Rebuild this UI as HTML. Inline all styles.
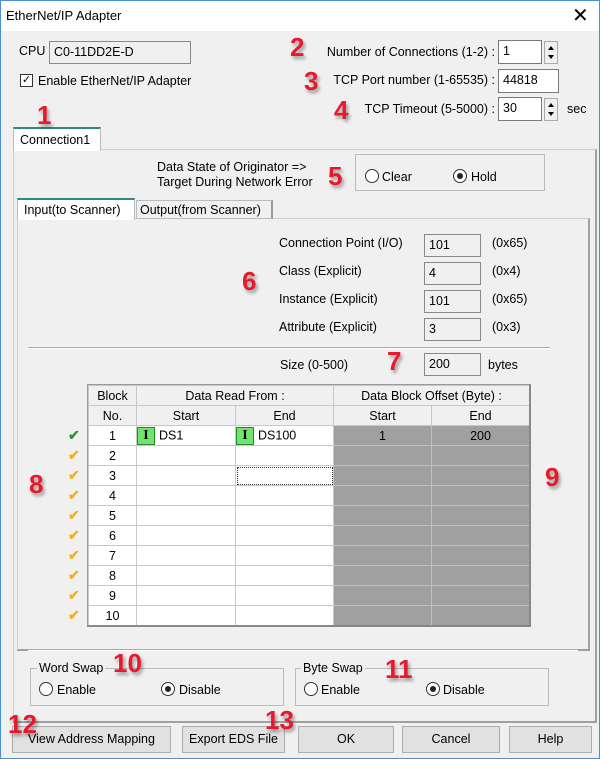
<!DOCTYPE html>
<html><head><meta charset="utf-8"><style>
*{box-sizing:border-box;margin:0;padding:0}
body{width:600px;height:759px;background:#f0f0f0;font-family:"Liberation Sans",sans-serif;font-size:12.5px;color:#000;position:relative;overflow:hidden}
.a{position:absolute}
.win{left:0;top:0;width:600px;height:759px;border:1px solid #4a90d9;}
.title{left:1px;top:1px;width:598px;height:30px;background:#fff}
.box{position:absolute;background:#fff;border:1px solid #7a7a7a;padding:3px 4px;font-size:12.5px}
.ro{background:#f0f0f0;border:1px solid #888}
.red{position:absolute;color:#e8192c;font-weight:bold;font-size:26px;text-shadow:2px 3px 3px rgba(0,0,0,.35);line-height:1}
.spin{position:absolute;width:14px;height:23px;border:1px solid #aaa;background:#f0f0f0}
.spin:before,.spin:after{content:"";position:absolute;left:3px;border-left:3px solid transparent;border-right:3px solid transparent}
.spin:before{top:4px;border-bottom:4px solid #000}
.spin:after{bottom:4px;border-top:4px solid #000}
.radio{position:absolute;width:14px;height:14px;border-radius:50%;border:1px solid #333;background:#fff}
.radio.on:after{content:"";position:absolute;left:3px;top:3px;width:6px;height:6px;border-radius:50%;background:#222}
.grp{position:absolute;border:1px solid #bbb}
.btn{position:absolute;border:1px solid #adadad;background:#e1e1e1;text-align:center;line-height:25px;height:27px}
.rt{position:absolute;right:105px;text-align:right;white-space:nowrap}
table{border-collapse:collapse;position:absolute;left:88px;top:385px;font-size:12.5px}
td{border:1px solid #c8c8c8;height:20px;text-align:center;padding:0;background:#fff}
td.h{background:#f0f0f0}
td.g{background:#a0a0a0;border-color:#c0c0c0}
.ii{display:inline-block;width:18px;height:18px;background:#6ee66e;border:1px solid #2a8a2a;font-family:"Liberation Serif",serif;font-weight:bold;font-size:14px;line-height:16px;text-align:center;vertical-align:middle;margin-right:4px}
.ck{position:absolute;left:68px;font-size:14px;font-weight:bold;color:#f0b020}
</style></head><body>
<div class="a win"></div>
<div class="a title"></div>
<div class="a" style="left:6px;top:8px;font-size:13px">EtherNet/IP Adapter</div>
<div class="a" style="left:572px;top:3px;font-size:20px;font-weight:300">✕</div>

<div class="a" style="left:19px;top:44px">CPU</div>
<div class="box ro" style="left:49px;top:41px;width:142px;height:23px">C0-11DD2E-D</div>
<div class="a" style="left:20px;top:74px;width:13px;height:13px;border:1px solid #333;background:#fff;font-size:11px;line-height:11px;text-align:center">✓</div>
<div class="a" style="left:38px;top:74px">Enable EtherNet/IP Adapter</div>

<div class="rt" style="top:45px">Number of Connections (1-2) :</div>
<div class="box" style="left:498px;top:40px;width:44px;height:24px">1</div>
<div class="spin" style="left:544px;top:41px"></div>
<div class="rt" style="top:73px">TCP Port number (1-65535) :</div>
<div class="box" style="left:498px;top:69px;width:61px;height:24px">44818</div>
<div class="rt" style="top:102px">TCP Timeout (5-5000) :</div>
<div class="box" style="left:498px;top:97px;width:44px;height:24px">30</div>
<div class="spin" style="left:544px;top:98px"></div>
<div class="a" style="left:567px;top:102px">sec</div>

<div class="a" style="left:13px;top:149px;width:584px;height:574px;border:1px solid #d0d0d0;border-right:2px solid #a0a0a0;border-bottom:2px solid #a0a0a0"></div>
<div class="a" style="left:13px;top:127px;width:88px;height:24px;background:#fff;border:1px solid #bbb;border-top:2px solid #2a8a8a;border-bottom:none;padding:4px 0 0 6px">Connection1</div>

<div class="a" style="left:157px;top:160px;line-height:15px">Data State of Originator =&gt;<br>Target During Network Error</div>
<div class="grp" style="left:355px;top:154px;width:190px;height:37px"></div>
<div class="radio" style="left:365px;top:169px"></div><div class="a" style="left:382px;top:170px">Clear</div>
<div class="radio on" style="left:453px;top:169px"></div><div class="a" style="left:471px;top:170px">Hold</div>

<div class="a" style="left:17px;top:218px;width:573px;height:433px;border:1px solid #d0d0d0;border-right:2px solid #a0a0a0;border-bottom:2px solid #a0a0a0"></div>
<div class="a" style="left:17px;top:198px;width:118px;height:22px;background:#fff;border:1px solid #bbb;border-top:2px solid #2a8a8a;border-bottom:none;padding:3px 0 0 6px;white-space:nowrap">Input(to Scanner)</div>
<div class="a" style="left:136px;top:200px;width:137px;height:19px;border:1px solid #bbb;border-right:2px solid #999;padding:2px 0 0 3px;white-space:nowrap">Output(from Scanner)</div>

<div class="a" style="left:279px;top:236px">Connection Point (I/O)</div>
<div class="box ro" style="left:424px;top:234px;width:57px;height:23px">101</div><div class="a" style="left:492px;top:236px">(0x65)</div>
<div class="a" style="left:279px;top:264px">Class (Explicit)</div>
<div class="box ro" style="left:424px;top:262px;width:57px;height:23px">4</div><div class="a" style="left:492px;top:264px">(0x4)</div>
<div class="a" style="left:279px;top:292px">Instance (Explicit)</div>
<div class="box ro" style="left:424px;top:290px;width:57px;height:23px">101</div><div class="a" style="left:492px;top:292px">(0x65)</div>
<div class="a" style="left:279px;top:320px">Attribute (Explicit)</div>
<div class="box ro" style="left:424px;top:318px;width:57px;height:23px">3</div><div class="a" style="left:492px;top:320px">(0x3)</div>
<div class="a" style="left:28px;top:347px;width:522px;height:2px;border-top:1px solid #aaa;border-bottom:1px solid #fff"></div>
<div class="a" style="left:280px;top:358px">Size (0-500)</div>
<div class="box ro" style="left:424px;top:353px;width:57px;height:23px">200</div><div class="a" style="left:488px;top:358px">bytes</div>

<table>
<tr><td class="h" style="width:48px">Block</td><td class="h" colspan="2">Data Read From :</td><td class="h" colspan="2">Data Block Offset (Byte) :</td></tr>
<tr><td class="h">No.</td><td class="h" style="width:99px">Start</td><td class="h" style="width:98px">End</td><td class="h" style="width:98px">Start</td><td class="h" style="width:98px">End</td></tr>
<tr><td>1</td><td style="text-align:left"><span class="ii">I</span>DS1</td><td style="text-align:left"><span class="ii">I</span>DS100</td><td class="g">1</td><td class="g">200</td></tr>
<tr><td>2</td><td></td><td></td><td class="g"></td><td class="g"></td></tr>
<tr><td>3</td><td></td><td style="outline:1px dotted #333;outline-offset:-2px"></td><td class="g"></td><td class="g"></td></tr>
<tr><td>4</td><td></td><td></td><td class="g"></td><td class="g"></td></tr>
<tr><td>5</td><td></td><td></td><td class="g"></td><td class="g"></td></tr>
<tr><td>6</td><td></td><td></td><td class="g"></td><td class="g"></td></tr>
<tr><td>7</td><td></td><td></td><td class="g"></td><td class="g"></td></tr>
<tr><td>8</td><td></td><td></td><td class="g"></td><td class="g"></td></tr>
<tr><td>9</td><td></td><td></td><td class="g"></td><td class="g"></td></tr>
<tr><td>10</td><td></td><td></td><td class="g"></td><td class="g"></td></tr>
</table>
<div class="a" style="left:87px;top:384px;width:444px;height:243px;border:1px solid #999;border-right:2px solid #888;border-bottom:2px solid #888"></div>
<div class="ck" style="top:427px;color:#2a9a2a">✔</div>
<div class="ck" style="top:447px">✔</div><div class="ck" style="top:467px">✔</div><div class="ck" style="top:487px">✔</div>
<div class="ck" style="top:507px">✔</div><div class="ck" style="top:527px">✔</div><div class="ck" style="top:547px">✔</div>
<div class="ck" style="top:567px">✔</div><div class="ck" style="top:587px">✔</div><div class="ck" style="top:607px">✔</div>

<div class="a" style="left:28px;top:649px;width:550px;height:2px;border-top:1px solid #aaa;border-bottom:1px solid #fff"></div>
<div class="grp" style="left:30px;top:668px;width:254px;height:38px"></div>
<div class="a" style="left:37px;top:661px;background:#f0f0f0;padding:0 2px">Word Swap</div>
<div class="radio" style="left:39px;top:682px"></div><div class="a" style="left:57px;top:683px">Enable</div>
<div class="radio on" style="left:161px;top:682px"></div><div class="a" style="left:179px;top:683px">Disable</div>
<div class="grp" style="left:295px;top:668px;width:254px;height:38px"></div>
<div class="a" style="left:301px;top:661px;background:#f0f0f0;padding:0 2px">Byte Swap</div>
<div class="radio" style="left:304px;top:682px"></div><div class="a" style="left:321px;top:683px">Enable</div>
<div class="radio on" style="left:426px;top:682px"></div><div class="a" style="left:443px;top:683px">Disable</div>

<div class="btn" style="left:12px;top:726px;width:159px">View Address Mapping</div>
<div class="btn" style="left:182px;top:726px;width:103px">Export EDS File</div>
<div class="btn" style="left:298px;top:726px;width:96px">OK</div>
<div class="btn" style="left:402px;top:726px;width:98px">Cancel</div>
<div class="btn" style="left:509px;top:726px;width:83px">Help</div>

<div class="red" style="left:37px;top:102px">1</div>
<div class="red" style="left:290px;top:34px">2</div>
<div class="red" style="left:304px;top:68px">3</div>
<div class="red" style="left:334px;top:97px">4</div>
<div class="red" style="left:328px;top:163px">5</div>
<div class="red" style="left:242px;top:268px">6</div>
<div class="red" style="left:387px;top:348px">7</div>
<div class="red" style="left:29px;top:471px">8</div>
<div class="red" style="left:545px;top:464px">9</div>
<div class="red" style="left:113px;top:650px">10</div>
<div class="red" style="left:385px;top:656px">11</div>
<div class="red" style="left:8px;top:711px">12</div>
<div class="red" style="left:265px;top:707px">13</div>
</body></html>
